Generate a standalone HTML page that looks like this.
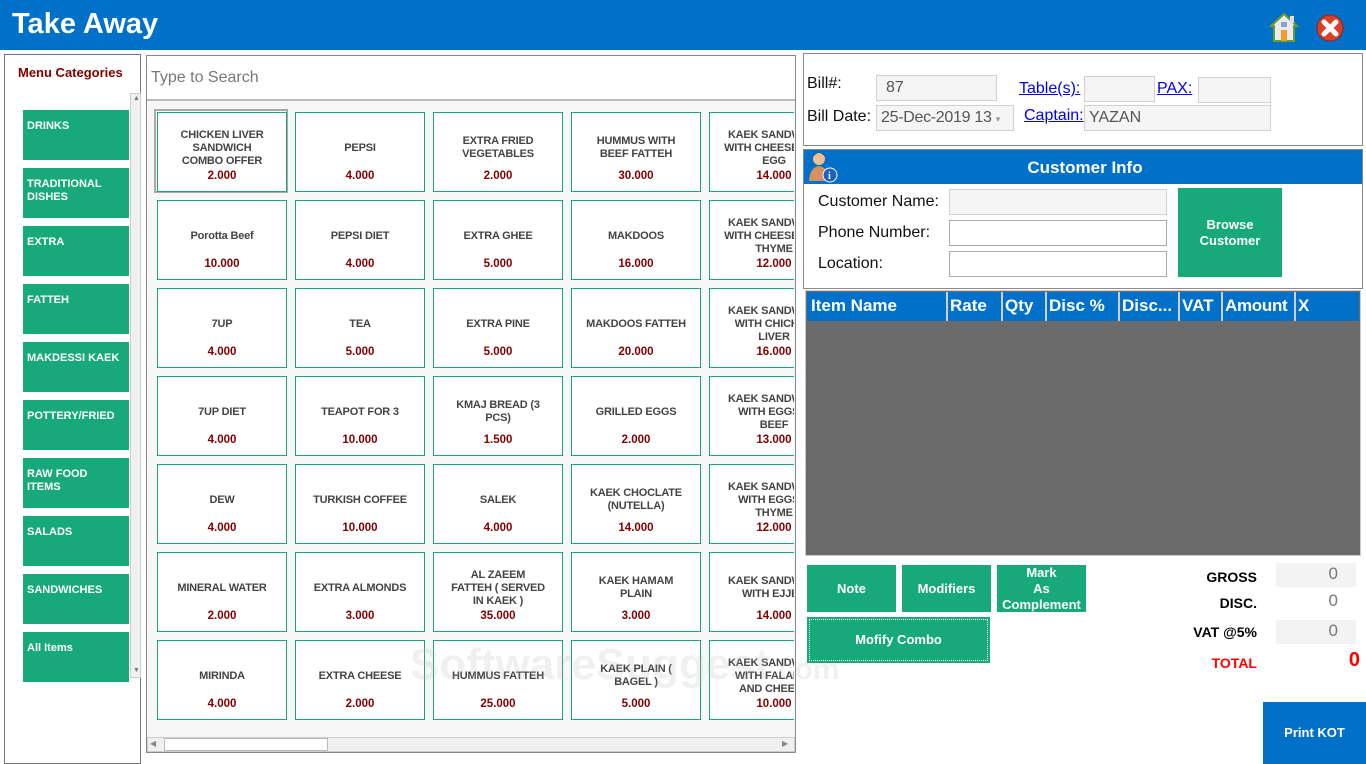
<!DOCTYPE html>
<html><head><meta charset="utf-8"><style>
*{box-sizing:border-box;margin:0;padding:0}
body{width:1366px;height:764px;background:#fff;font-family:"Liberation Sans",sans-serif;position:relative;overflow:hidden}
.a{position:absolute}
.hdr{left:0;top:0;width:1366px;height:50px;background:#0070c9}
.title{left:12px;top:8px;color:#fff;font-weight:bold;font-size:29px}
.cat{position:absolute;left:23px;width:106px;height:50px;background:#17a97a;color:#fff;font-weight:bold;font-size:11px;padding:10px 24px 10px 4px;line-height:13px}
.tile{position:absolute;width:130px;height:80px;background:#fff;border:1px solid #1aa57a;text-align:center;font-weight:bold;font-size:11px;color:#444}
.tile .n{position:absolute;left:0;right:0;top:8px;height:62px;display:flex;align-items:center;justify-content:center;line-height:13px;padding:0 13px 8px;letter-spacing:-0.2px}
.tile .p{position:absolute;left:0;right:0;top:57px;color:#800000;font-size:11.5px}
.inp{position:absolute;background:#f5f5f5;border:1px solid #d0d0d0;font-size:16px;color:#555;padding:3px 0 0 9px}
.lbl{position:absolute;font-size:16px;color:#111}
.lnk{position:absolute;font-size:16px;color:#0000ee;text-decoration:underline}
.gbtn{position:absolute;background:#17a97a;color:#fff;font-weight:bold;font-size:13px;display:flex;align-items:center;justify-content:center;text-align:center;line-height:16px}
.th{position:absolute;top:292px;height:29px;color:#fff;font-weight:bold;font-size:17px;padding:4px 4px;border-right:2px solid #d0d0d0}
.tl{position:absolute;font-weight:bold;font-size:14px;text-align:right;width:120px;left:1137px}
.tv{position:absolute;left:1276px;width:80px;height:24px;background:#f3f3f3;font-size:17px;color:#777;text-align:right;padding:1px 18px 0 0}
</style></head><body>
<div class="a hdr"></div>
<div class="a title">Take Away</div>
<svg class="a" style="left:1268px;top:11px" width="32" height="32" viewBox="0 0 32 32"><path d="M16 3 L3 15 L6 15 L6 30 L26 30 L26 15 L29 15 Z" fill="#e9e9f3" stroke="#6a9a2a" stroke-width="2"/><rect x="22" y="5" width="4" height="7" fill="#ddd"/><rect x="13" y="19" width="6" height="11" fill="#f0a020"/><rect x="13" y="11" width="6" height="5" fill="#8aa0d0"/></svg>
<svg class="a" style="left:1315px;top:13px" width="30" height="30" viewBox="0 0 30 30"><circle cx="15" cy="15" r="13" fill="#d8402a" stroke="#a02010"/><path d="M9 9 L21 21 M21 9 L9 21" stroke="#fff" stroke-width="5" stroke-linecap="round"/></svg>

<div class="a" style="left:4px;top:54px;width:137px;height:710px;border:1px solid #777"></div>
<div class="a" style="left:18px;top:65px;color:#800000;font-weight:bold;font-size:13px">Menu Categories</div>
<div class="a" style="left:130px;top:93px;width:11px;height:585px;border:1px solid #ccc;background:#f0f0f0"></div>
<div class="a" style="left:133px;top:95px;font-size:7px;color:#777">▲</div>
<div class="a" style="left:133px;top:667px;font-size:7px;color:#777">▼</div>
<div class="cat" style="top:110px">DRINKS</div>
<div class="cat" style="top:168px">TRADITIONAL DISHES</div>
<div class="cat" style="top:226px">EXTRA</div>
<div class="cat" style="top:284px">FATTEH</div>
<div class="cat" style="top:342px;padding-right:2px">MAKDESSI KAEK</div>
<div class="cat" style="top:400px;padding-right:2px">POTTERY/FRIED</div>
<div class="cat" style="top:458px">RAW FOOD ITEMS</div>
<div class="cat" style="top:516px">SALADS</div>
<div class="cat" style="top:574px;padding-right:2px">SANDWICHES</div>
<div class="cat" style="top:632px">All Items</div>

<div class="a" style="left:146px;top:55px;width:650px;height:698px;border:1px solid #888;background:#f7f7f7"></div>
<div class="a" style="left:147px;top:56px;width:648px;height:45px;background:#fff;border-bottom:2px solid #bbb"></div>
<div class="a" style="left:151px;top:69px;font-size:16px;color:#777">Type to Search</div>
<div class="a" style="left:148px;top:103px;width:646px;height:632px;overflow:hidden">
<div class="a" style="left:6px;top:6px;width:134px;height:84px;border:2px solid #aaa"></div>
<div id="g"></div>
</div>
<div class="a" style="left:147px;top:737px;width:648px;height:15px;background:#f0f0f0;border:1px solid #ccc"></div>
<div class="a" style="left:164px;top:738px;width:164px;height:13px;background:#fff;border:1px solid #bbb"></div>
<div class="a" style="left:150px;top:739px;font-size:8px;color:#888">◀</div>
<div class="a" style="left:782px;top:739px;font-size:8px;color:#888">▶</div>

<div class="a" style="left:803px;top:53px;width:560px;height:93px;border:1px solid #888"></div>
<div class="lbl" style="left:807px;top:75px">Bill#:</div>
<div class="inp" style="left:876px;top:75px;width:121px;height:26px">87</div>
<div class="lnk" style="left:1019px;top:80px">Table(s):</div>
<div class="inp" style="left:1084px;top:76px;width:71px;height:26px"></div>
<div class="lnk" style="left:1157px;top:80px">PAX:</div>
<div class="inp" style="left:1198px;top:77px;width:73px;height:26px"></div>
<div class="lbl" style="left:807px;top:108px">Bill Date:</div>
<div class="inp" style="left:876px;top:105px;width:138px;height:26px;padding-left:4px;letter-spacing:-0.3px">25-Dec-2019 13 <span style="font-size:9px;color:#999">▾</span></div>
<div class="lnk" style="left:1024px;top:107px">Captain:</div>
<div class="inp" style="left:1084px;top:105px;width:187px;height:26px;padding-left:4px">YAZAN</div>

<div class="a" style="left:803px;top:149px;width:560px;height:140px;border:1px solid #888"></div>
<div class="a" style="left:804px;top:150px;width:558px;height:34px;background:#0070c9"></div>
<svg class="a" style="left:808px;top:151px" width="30" height="32" viewBox="0 0 30 32"><circle cx="11" cy="8" r="6" fill="#f2c090"/><path d="M5 6 Q11 -2 17 6 L16 4 Q11 0 6 4Z" fill="#5a2a10"/><path d="M1 30 Q2 16 11 15 Q20 16 21 30Z" fill="#d89060"/><circle cx="22" cy="24" r="7" fill="#2060c0" stroke="#fff"/><text x="20" y="28" font-size="10" fill="#fff" font-weight="bold" font-family="Liberation Serif">i</text></svg>
<div class="a" style="left:804px;top:158px;width:558px;text-align:center;color:#fff;font-weight:bold;font-size:17px;padding-left:4px">Customer Info</div>
<div class="lbl" style="left:818px;top:193px">Customer Name:</div>
<div class="lbl" style="left:818px;top:224px">Phone Number:</div>
<div class="lbl" style="left:818px;top:255px">Location:</div>
<div class="inp" style="left:949px;top:189px;width:218px;height:26px"></div>
<div class="inp" style="left:949px;top:220px;width:218px;height:26px;background:#fff;border-color:#aaa"></div>
<div class="inp" style="left:949px;top:251px;width:218px;height:26px;background:#fff;border-color:#aaa"></div>
<div class="gbtn" style="left:1178px;top:188px;width:104px;height:89px">Browse<br>Customer</div>

<div class="a" style="left:805px;top:290px;width:556px;height:266px;border:1px solid #ccc;background:#6b6b6b"></div>
<div class="a" style="left:807px;top:292px;width:552px;height:29px;background:#0070c9"></div>
<div class="th" style="left:807px;width:141px">Item Name</div>
<div class="th" style="left:946px;width:57px">Rate</div>
<div class="th" style="left:1001px;width:46px">Qty</div>
<div class="th" style="left:1045px;width:75px">Disc %</div>
<div class="th" style="left:1118px;width:62px">Disc...</div>
<div class="th" style="left:1178px;width:45px">VAT</div>
<div class="th" style="left:1221px;width:75px;letter-spacing:-0.3px">Amount</div>
<div class="th" style="left:1294px;width:60px;border:none">X</div>

<div class="gbtn" style="left:807px;top:565px;width:89px;height:47px">Note</div>
<div class="gbtn" style="left:902px;top:565px;width:89px;height:47px">Modifiers</div>
<div class="gbtn" style="left:997px;top:565px;width:89px;height:47px">Mark<br>As<br>Complement</div>
<div class="gbtn" style="left:807px;top:617px;width:183px;height:46px">Mofify Combo</div>
<div class="a" style="left:809px;top:619px;width:179px;height:42px;border:1px dotted #fff"></div>

<div class="a" style="left:410px;top:640px;font-size:44px;font-weight:bold;color:rgba(180,180,180,.2)">SoftwareSuggest<span style="font-size:30px">.com</span></div>

<div class="tl" style="top:569px">GROSS</div>
<div class="tl" style="top:595px">DISC.</div>
<div class="tl" style="top:624px">VAT @5%</div>
<div class="tl" style="top:655px;color:#ff0000">TOTAL</div>
<div class="tv" style="top:563px">0</div>
<div class="tv" style="top:590px;background:#fff">0</div>
<div class="tv" style="top:620px">0</div>
<div class="a" style="left:1300px;top:649px;width:60px;text-align:right;color:#ff0000;font-weight:bold;font-size:20px">0</div>
<div class="gbtn" style="left:1263px;top:702px;width:103px;height:62px;background:#0070c9">Print KOT</div>

<script>
var d=[
["CHICKEN LIVER SANDWICH COMBO OFFER","2.000","PEPSI","4.000","EXTRA FRIED VEGETABLES","2.000","HUMMUS WITH BEEF FATTEH","30.000","KAEK SANDWICH WITH CHEESE AND EGG","14.000"],
["Porotta Beef","10.000","PEPSI DIET","4.000","EXTRA GHEE","5.000","MAKDOOS","16.000","KAEK SANDWICH WITH CHEESE AND THYME","12.000"],
["7UP","4.000","TEA","5.000","EXTRA PINE","5.000","MAKDOOS FATTEH","20.000","KAEK SANDWICH WITH CHICKEN LIVER","16.000"],
["7UP DIET","4.000","TEAPOT FOR 3","10.000","KMAJ BREAD (3 PCS)","1.500","GRILLED EGGS","2.000","KAEK SANDWICH WITH EGGS &amp; BEEF","13.000"],
["DEW","4.000","TURKISH COFFEE","10.000","SALEK","4.000","KAEK CHOCLATE (NUTELLA)","14.000","KAEK SANDWICH WITH EGGS &amp; THYME","12.000"],
["MINERAL WATER","2.000","EXTRA ALMONDS","3.000","AL ZAEEM<br>FATTEH ( SERVED<br>IN KAEK )","35.000","KAEK HAMAM PLAIN","3.000","KAEK SANDWICH WITH EJJEH","14.000"],
["MIRINDA","4.000","EXTRA CHEESE","2.000","HUMMUS FATTEH","25.000","KAEK PLAIN ( BAGEL )","5.000","KAEK SANDWICH WITH FALAFEL AND CHEESE","10.000"]];
var h="";
for(var r=0;r<7;r++)for(var c=0;c<5;c++){
h+='<div class="tile" style="left:'+(9+c*138)+'px;top:'+(9+r*88)+'px"><div class="n">'+d[r][c*2]+'</div><div class="p">'+d[r][c*2+1]+'</div></div>';}
document.getElementById("g").innerHTML=h;
</script>
</body></html>
